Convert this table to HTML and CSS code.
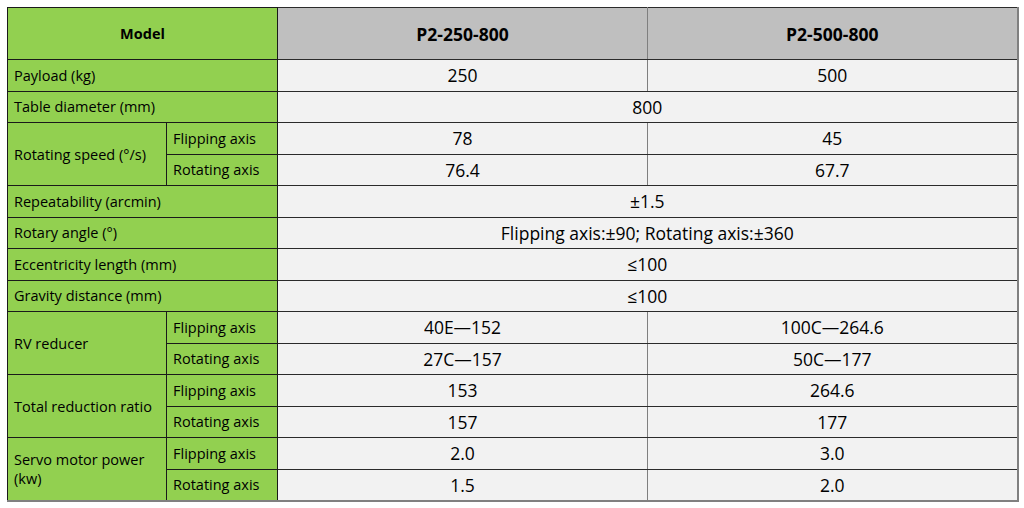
FILE: index.html
```html
<!DOCTYPE html>
<html>
<head>
<meta charset="utf-8">
<link rel="stylesheet" href="styles.css">
</head>
<body>
<table class="spec">
  <colgroup>
    <col class="c1"><col class="c2"><col class="c3"><col class="c4">
  </colgroup>
  <tr class="head">
    <th colspan="2" class="g">Model</th>
    <th class="m">P2-250-800</th>
    <th class="m">P2-500-800</th>
  </tr>
  <tr><td colspan="2" class="g l">Payload (kg)</td><td>250</td><td>500</td></tr>
  <tr><td colspan="2" class="g l">Table diameter (mm)</td><td colspan="2">800</td></tr>
  <tr><td rowspan="2" class="g l">Rotating speed (°/s)</td><td class="g l">Flipping axis</td><td>78</td><td>45</td></tr>
  <tr><td class="g l">Rotating axis</td><td>76.4</td><td>67.7</td></tr>
  <tr><td colspan="2" class="g l">Repeatability (arcmin)</td><td colspan="2">±1.5</td></tr>
  <tr><td colspan="2" class="g l">Rotary angle (°)</td><td colspan="2">Flipping axis:±90; Rotating axis:±360</td></tr>
  <tr><td colspan="2" class="g l">Eccentricity length (mm)</td><td colspan="2">≤100</td></tr>
  <tr><td colspan="2" class="g l">Gravity distance (mm)</td><td colspan="2">≤100</td></tr>
  <tr><td rowspan="2" class="g l">RV reducer</td><td class="g l">Flipping axis</td><td>40E—152</td><td>100C—264.6</td></tr>
  <tr><td class="g l">Rotating axis</td><td>27C—157</td><td>50C—177</td></tr>
  <tr><td rowspan="2" class="g l">Total reduction ratio</td><td class="g l">Flipping axis</td><td>153</td><td>264.6</td></tr>
  <tr><td class="g l">Rotating axis</td><td>157</td><td>177</td></tr>
  <tr><td rowspan="2" class="g l">Servo motor power (kw)</td><td class="g l">Flipping axis</td><td>2.0</td><td>3.0</td></tr>
  <tr><td class="g l">Rotating axis</td><td>1.5</td><td>2.0</td></tr>
</table>
</body>
</html>
```
FILE: styles.css
```css
html, body {
  margin: 0;
  padding: 0;
  background: #ffffff;
}
body {
  padding: 7px 0 0 7px;
  font-family: "Open Sans", "Noto Sans", "DejaVu Sans", sans-serif;
  font-size: 17.5px;
  color: #000;
}
.spec {
  border-collapse: collapse;
  table-layout: fixed;
  width: 1010px;
  border-right: 2px solid #808080;
  border-bottom: 2px solid #808080;
}
.c1 { width: 159px; }
.c2 { width: 111px; }
.c3 { width: 370px; }
.c4 { width: 370px; }
.spec th, .spec td {
  border: 1px solid #7f7f7f;
  border-top-color: #2b2b2b;
  border-bottom-color: #2b2b2b;
  padding: 0 6px;
  text-align: center;
  background: #f2f2f2;
  height: 31.5px;
  line-height: 20px;
  box-sizing: border-box;
}
.spec .head th {
  height: 52px;
  background: #bfbfbf;
  font-weight: 700;
  font-size: 17.5px;
}
.spec .g {
  background: #92d050;
  border-color: #1a1a1a;
  font-size: 14.5px;
  line-height: 19px;
}
.spec .head th.g {
  background: #92d050;
  font-size: 14.5px;
}
.spec .l {
  text-align: left;
}
```
